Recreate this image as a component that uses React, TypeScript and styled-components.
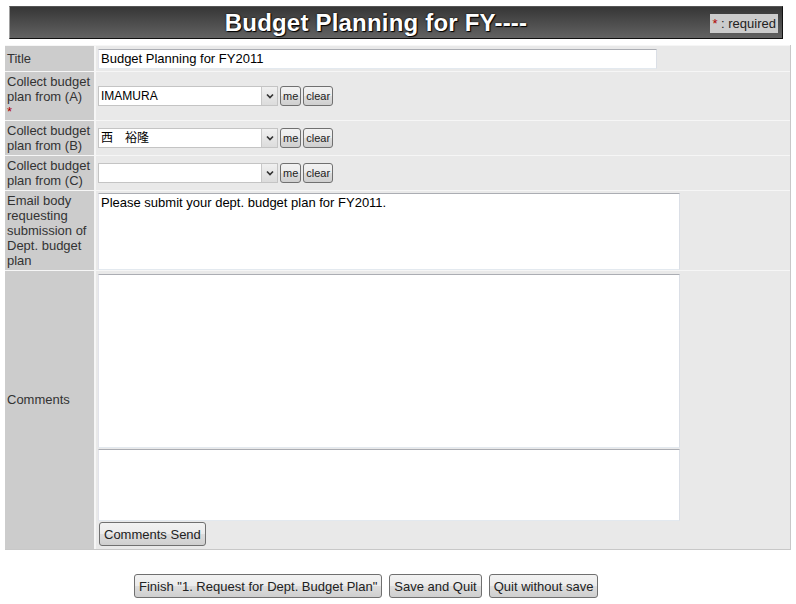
import styled, {createGlobalStyle} from 'styled-components';

const GlobalStyle = createGlobalStyle`
    body {
        margin: 0;
        background: #fff;
        font-family: "Liberation Sans", "Noto Sans CJK JP", sans-serif;
        font-size: 13px;
        color: #333;
    }
`;

const Page = styled.div`
    padding: 6px 5px 10px 5px;
    width: 786px;
`;

const Header = styled.div`
    position: relative;
    margin: 0 8px 6px 4px;
    height: 33px;
    box-sizing: border-box;
    padding-right: 40px;
    border: 1px solid #111;
    border-left-color: #a0a0a0;
    border-top-color: #555;
    background: linear-gradient(#363636, #626262);
    display: flex;
    align-items: center;
    justify-content: center;
`;

const HeaderTitle = styled.h1`
    margin: 0;
    color: #fff;
    font-size: 24px;
    font-weight: bold;
    letter-spacing: 0.2px;
    text-shadow: 0 0 2px #000, 1px 1px 1px #000;
`;

const RequiredBadge = styled.span`
    position: absolute;
    right: 4px;
    top: 7px;
    background: #cccccc;
    padding: 1px 2px;
    font-size: 13px;
    line-height: 17px;
    color: #222;
`;

const Star = styled.span`
    color: #b00000;
`;

const FormGrid = styled.div`
    display: grid;
    grid-template-columns: 89px 1fr;
    grid-template-rows: 25px 48px 34px 34px 79px 278px;
    column-gap: 2px;
    row-gap: 1px;
    background: #f6f6f6;
    border-right: 1px solid #c8c8c8;
    border-bottom: 1px solid #c8c8c8;
    padding-top: 1px;
`;

const LabelCell = styled.div<{$pb?: number}>`
    background: #cccccc;
    padding: 0 2px ${p => p.$pb ?? 0}px 2px;
    display: flex;
    align-items: center;
    line-height: 15px;
    color: #333;
`;

const ValueCell = styled.div<{$top?: boolean}>`
    background: #e9e9e9;
    padding: ${p => (p.$top ? '2px 2px 0 2px' : '0 2px')};
    display: flex;
    flex-direction: column;
    justify-content: ${p => (p.$top ? 'flex-start' : 'center')};
    align-items: flex-start;
    gap: 1px;
`;

const TextInput = styled.input`
    width: 559px;
    height: 20px;
    box-sizing: border-box;
    border: 1px solid;
    border-color: #abadb3 #dbdfe6 #e3e9ef #e2e3ea;
    font: inherit;
    font-size: 13px;
    color: #000;
    padding: 0 2px;
    outline: none;
`;

const SelectRow = styled.div`
    display: flex;
    align-items: center;
    gap: 2px;
`;

const SelectBox = styled.div`
    display: flex;
    width: 180px;
    height: 20px;
    box-sizing: border-box;
    border: 1px solid #c4c4c4;
    background: #fff;
`;

const SelectInput = styled.select`
    appearance: none;
    flex: 1;
    min-width: 0;
    border: none;
    background: transparent;
    font-family: "Liberation Sans", "Noto Sans CJK JP", sans-serif;
    font-size: 12px;
    color: #000;
    padding: 0 2px;
    outline: none;
`;

const ArrowBox = styled.span`
    width: 15px;
    border-left: 1px solid #c8c8c8;
    background: linear-gradient(#f0f0f0, #dcdcdc);
    display: flex;
    align-items: center;
    justify-content: center;
`;

const Button = styled.button<{$small?: boolean}>`
    font-family: "Liberation Sans", sans-serif;
    font-size: ${p => (p.$small ? '11px' : '13px')};
    color: #222;
    height: ${p => (p.$small ? '20px' : '24px')};
    padding: ${p => (p.$small ? '0 2px' : '0 4px')};
    border: 1px solid #707070;
    border-radius: 3px;
    background: linear-gradient(#f2f2f2 0%, #ebebeb 50%, #dddddd 51%, #cfcfcf 100%);
    cursor: pointer;

    &:hover {
        background: linear-gradient(#eaf6fd 0%, #d9f0fc 50%, #bee6fd 51%, #a7d9f5 100%);
    }
`;

const TextArea = styled.textarea<{$h: number}>`
    width: 582px;
    height: ${p => p.$h}px;
    box-sizing: border-box;
    border: 1px solid;
    border-color: #abadb3 #dbdfe6 #e3e9ef #e2e3ea;
    font-family: "Liberation Sans", sans-serif;
    font-size: 13px;
    color: #000;
    padding: 1px 2px;
    resize: none;
    outline: none;
    margin: 0;
    display: block;
`;

const CommentsTop = styled(TextArea)`
    margin-top: 1px;
`;

const CommentsButton = styled(Button)`
    margin: 0 0 0 1px;
`;

const Footer = styled.div`
    display: flex;
    gap: 7px;
    padding: 24px 0 0 129px;
`;

function Chevron() {
    return (
        <svg width="8" height="6" viewBox="0 0 8 6">
            <path d="M1 1.5 L4 4.5 L7 1.5" fill="none" stroke="#333" strokeWidth="1.7" />
        </svg>
    );
}

function PersonSelect({value}: {value: string}) {
    return (
        <SelectRow>
            <SelectBox>
                <SelectInput defaultValue={value}>
                    <option value={value}>{value}</option>
                </SelectInput>
                <ArrowBox>
                    <Chevron />
                </ArrowBox>
            </SelectBox>
            <Button $small>me</Button>
            <Button $small>clear</Button>
        </SelectRow>
    );
}

export default function App() {
    return (
        <>
            <GlobalStyle />
            <Page>
                <Header>
                    <HeaderTitle>Budget Planning for FY----</HeaderTitle>
                    <RequiredBadge>
                        <Star>*</Star> : required
                    </RequiredBadge>
                </Header>

                <FormGrid>
                    <LabelCell>Title</LabelCell>
                    <ValueCell>
                        <TextInput defaultValue="Budget Planning for FY2011" />
                    </ValueCell>

                    <LabelCell>
                        <div>
                            Collect budget plan from (A)
                            <br />
                            <Star>*</Star>
                        </div>
                    </LabelCell>
                    <ValueCell>
                        <PersonSelect value="IMAMURA" />
                    </ValueCell>

                    <LabelCell>Collect budget plan from (B)</LabelCell>
                    <ValueCell>
                        <PersonSelect value="西　裕隆" />
                    </ValueCell>

                    <LabelCell>Collect budget plan from (C)</LabelCell>
                    <ValueCell>
                        <PersonSelect value="" />
                    </ValueCell>

                    <LabelCell>Email body requesting submission of Dept. budget plan</LabelCell>
                    <ValueCell $top>
                        <TextArea $h={77} defaultValue="Please submit your dept. budget plan for FY2011." />
                    </ValueCell>

                    <LabelCell $pb={22}>Comments</LabelCell>
                    <ValueCell $top>
                        <CommentsTop $h={174} />
                        <TextArea $h={72} />
                        <CommentsButton>Comments Send</CommentsButton>
                    </ValueCell>
                </FormGrid>

                <Footer>
                    <Button>Finish "1. Request for Dept. Budget Plan"</Button>
                    <Button>Save and Quit</Button>
                    <Button>Quit without save</Button>
                </Footer>
            </Page>
        </>
    );
}
